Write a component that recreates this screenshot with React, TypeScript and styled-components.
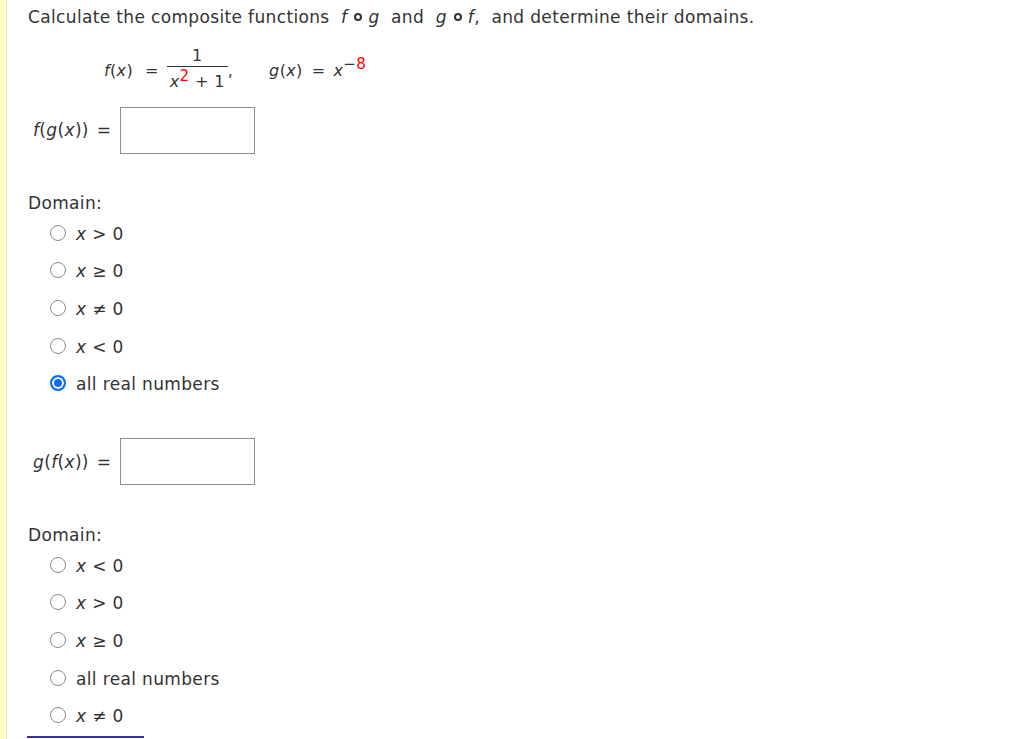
import React from "react";
import styled, { createGlobalStyle } from "styled-components";

const GlobalStyle = createGlobalStyle`
  html, body {
    margin: 0;
    padding: 0;
    background: #ffffff;
  }
  body {
    font-family: Verdana, "DejaVu Sans", sans-serif;
    font-size: 17px;
    letter-spacing: 0.35px;
    color: #333333;
  }
`;

const Page = styled.div`
  display: flex;
  min-height: 739px;
  overflow: hidden;
`;

const Strip = styled.div`
  width: 6px;
  flex-shrink: 0;
  background: #ffffcc;
  border-right: 1px solid #e9e9b8;
`;

const Content = styled.div`
  flex: 1;
  padding: 7px 0 0 21px;
  display: flex;
  flex-direction: column;
`;

const Prompt = styled.div`
  line-height: 20px;
  height: 20px;
`;

const It = styled.i`
  font-style: italic;
`;

/* composition ring between f and g */
const Ring = styled.span`
  display: inline-block;
  width: 8px;
  height: 8px;
  box-sizing: border-box;
  border: 2px solid #333;
  border-radius: 50%;
  margin: 0 6px 0 7px;
  vertical-align: 2px;
`;

const FormulaRow = styled.div`
  display: flex;
  align-items: center;
  margin: 20px 0 0 76px;
  height: 48px;
  line-height: 20px;
  font-size: 16px;
`;

const Eq = styled.span<{ $l: number; $r: number }>`
  margin: 0 ${(p) => p.$r}px 0 ${(p) => p.$l}px;
`;

const Fraction = styled.span`
  display: inline-flex;
  flex-direction: column;
  align-items: center;
  font-size: 16px;
  margin-bottom: 3px;
`;

const Num = styled.span`
  padding: 0 3px 2px;
  border-bottom: 1px solid #333;
  align-self: stretch;
  text-align: center;
  line-height: 16px;
`;

const Den = styled.span`
  padding: 6px 3px 0;
  line-height: 18px;
`;

const Sup = styled.sup<{ $red?: boolean; $lift: number }>`
  color: ${(p) => (p.$red ? "#ff0000" : "inherit")};
  font-size: 15px;
  vertical-align: ${(p) => p.$lift}px;
  line-height: 0;
`;

const Red = styled.span`
  color: #ff0000;
`;

const Gap = styled.span`
  width: 36px;
`;

const AnswerRow = styled.div<{ $top: number }>`
  display: flex;
  align-items: center;
  margin-top: ${(p) => p.$top}px;
  padding-left: 5px;
  height: 48px;
`;

const AnswerLabel = styled.span`
  width: 87px;
  display: flex;
  align-items: center;
  white-space: nowrap;
`;

const AnswerEq = styled.span`
  margin-left: 8px;
`;

const AnswerBox = styled.div`
  width: 133px;
  height: 45px;
  border: 1px solid #8f8f8f;
  background: #fff;
`;

const DomainTitle = styled.div<{ $top: number }>`
  margin-top: ${(p) => p.$top}px;
  line-height: 20px;
`;

const Options = styled.div`
  display: flex;
  flex-direction: column;
  padding-left: 22px;
  margin-top: 1px;
`;

const Option = styled.label`
  display: flex;
  align-items: center;
  height: 37.6px;
  gap: 10px;
`;

const Radio = styled.span<{ $checked?: boolean }>`
  width: 16px;
  height: 16px;
  box-sizing: border-box;
  border-radius: 50%;
  border: ${(p) => (p.$checked ? "2px solid #0b6cf5" : "1px solid #8a8a8a")};
  background: ${(p) => (p.$checked ? "#0b6cf5" : "#fff")};
  box-shadow: ${(p) => (p.$checked ? "inset 0 0 0 2px #fff" : "none")};
  flex-shrink: 0;
`;

const OptionText = styled.span`
  line-height: 20px;
  position: relative;
  top: 1px;
`;

const BottomRule = styled.div`
  margin-top: 2px;
  width: 117px;
  height: 2px;
  background: #33339a;
  margin-left: -1px;
`;

type Opt = { label: React.ReactNode; checked?: boolean };

const xOp = (op: string) => (
  <>
    <It>x</It> {op} 0
  </>
);

const first: Opt[] = [
  { label: xOp(">") },
  { label: xOp("≥") },
  { label: xOp("≠") },
  { label: xOp("<") },
  { label: "all real numbers", checked: true },
];

const second: Opt[] = [
  { label: xOp("<") },
  { label: xOp(">") },
  { label: xOp("≥") },
  { label: "all real numbers" },
  { label: xOp("≠") },
];

const OptionList = ({ items }: { items: Opt[] }) => (
  <Options>
    {items.map((o, i) => (
      <Option key={i}>
        <Radio $checked={o.checked} />
        <OptionText>{o.label}</OptionText>
      </Option>
    ))}
  </Options>
);

export default function App() {
  return (
    <>
      <GlobalStyle />
      <Page>
        <Strip />
        <Content>
          <Prompt>
            Calculate the composite functions&nbsp; <It>f</It>
            <Ring />
            <It>g</It>&nbsp; and&nbsp; <It>g</It>
            <Ring />
            <It>f</It>,&nbsp; and determine their domains.
          </Prompt>

          <FormulaRow>
            <span>
              <It>f</It>(<It>x</It>)
            </span>
            <Eq $l={12} $r={8}>=</Eq>
            <Fraction>
              <Num>1</Num>
              <Den>
                <It>x</It>
                <Sup $red $lift={6}>
                  2
                </Sup>{" "}
                + 1
              </Den>
            </Fraction>
            <span>,</span>
            <Gap />
            <span>
              <It>g</It>(<It>x</It>)
            </span>
            <Eq $l={9} $r={8}>=</Eq>
            <span>
              <It>x</It>
              <Sup $lift={7}>
                −<Red>8</Red>
              </Sup>
            </span>
          </FormulaRow>

          <AnswerRow $top={11}>
            <AnswerLabel>
              <It>f</It>(<It>g</It>(<It>x</It>))<AnswerEq>=</AnswerEq>
            </AnswerLabel>
            <AnswerBox />
          </AnswerRow>

          <DomainTitle $top={39}>Domain:</DomainTitle>
          <OptionList items={first} />

          <AnswerRow $top={36}>
            <AnswerLabel>
              <It>g</It>(<It>f</It>(<It>x</It>))<AnswerEq>=</AnswerEq>
            </AnswerLabel>
            <AnswerBox />
          </AnswerRow>

          <DomainTitle $top={39}>Domain:</DomainTitle>
          <OptionList items={second} />
          <BottomRule />
        </Content>
      </Page>
    </>
  );
}
